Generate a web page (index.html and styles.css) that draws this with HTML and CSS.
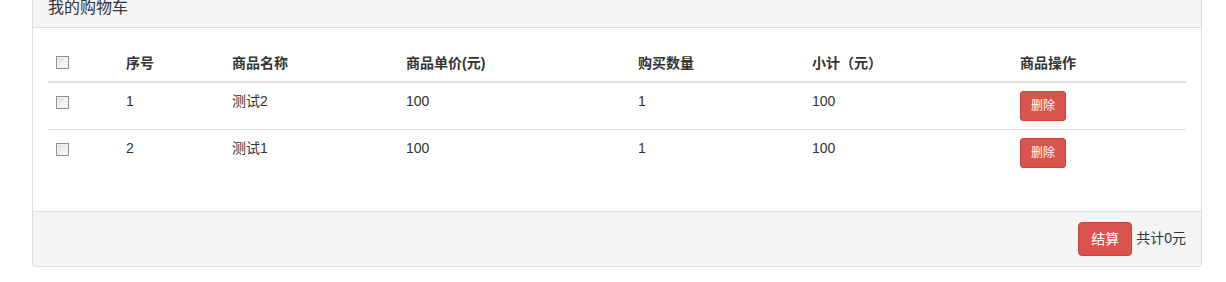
FILE: index.html
```html
<!DOCTYPE html>
<html lang="zh-CN">
<head>
<meta charset="utf-8">
<title>我的购物车</title>
<link rel="stylesheet" href="styles.css">
</head>
<body>
<div class="page">
  <div class="panel">
    <div class="panel-heading">
      <h3 class="panel-title">我的购物车</h3>
    </div>
    <div class="panel-body">
      <table class="cart">
        <thead>
          <tr>
            <th class="c-check"><input type="checkbox" class="cb cb-head"></th>
            <th class="c-no">序号</th>
            <th class="c-name">商品名称</th>
            <th class="c-price">商品单价(元)</th>
            <th class="c-qty">购买数量</th>
            <th class="c-sub">小计（元）</th>
            <th class="c-op">商品操作</th>
          </tr>
        </thead>
        <tbody>
          <tr>
            <td><input type="checkbox" class="cb"></td>
            <td>1</td>
            <td>测试2</td>
            <td>100</td>
            <td>1</td>
            <td>100</td>
            <td><button class="btn btn-danger btn-sm">删除</button></td>
          </tr>
          <tr>
            <td><input type="checkbox" class="cb"></td>
            <td>2</td>
            <td>测试1</td>
            <td>100</td>
            <td>1</td>
            <td>100</td>
            <td><button class="btn btn-danger btn-sm">删除</button></td>
          </tr>
        </tbody>
      </table>
    </div>
    <div class="panel-footer">
      <button class="btn btn-danger">结算</button> 共计0元
    </div>
  </div>
</div>
</body>
</html>
```
FILE: styles.css
```css
* { box-sizing: border-box; }
html, body { margin: 0; padding: 0; background: #fff; }
body {
  font-family: "Liberation Sans", Arial, "Noto Sans CJK SC", sans-serif;
  font-size: 14px;
  line-height: 20px;
  color: #333;
}
.page {
  padding-left: 32px;
  margin-top: -12px;
}
.panel {
  width: 1170px;
  border: 1px solid #ddd;
  border-radius: 4px;
  background: #fff;
  box-shadow: 0 1px 1px rgba(0,0,0,.05);
}
.panel-heading {
  padding: 10px 15px;
  background: #f5f5f5;
  border-bottom: 1px solid #ddd;
  border-radius: 3px 3px 0 0;
}
.panel-title {
  margin: 0;
  font-size: 16px;
  line-height: 17.6px;
  font-weight: normal;
  color: #333;
}
.panel-body {
  padding: 15px;
}
.cart {
  width: 1138px;
  border-collapse: collapse;
  border-spacing: 0;
  table-layout: fixed;
  margin-bottom: 20px;
}
.cart th, .cart td {
  padding: 8px;
  line-height: 20px;
  text-align: left;
  vertical-align: top;
  border-top: 1px solid #ddd;
}
.cart th {
  padding-top: 10px;
  font-weight: bold;
  vertical-align: bottom;
  border-top: 0;
  border-bottom: 2px solid #ddd;
}
.c-check { width: 70px; }
.c-no { width: 106px; }
.c-name { width: 174px; }
.c-price { width: 232px; }
.c-qty { width: 174px; }
.c-sub { width: 208px; }
.c-op { width: 174px; }

.cb {
  -webkit-appearance: none;
  appearance: none;
  display: inline-block;
  width: 13px;
  height: 13px;
  margin: 5px 0 0;
  vertical-align: top;
  border: 1px solid #8f8f8f;
  background: linear-gradient(135deg, #d8d8d8 0%, #f2f2f2 60%, #fcfcfc 100%);
  box-shadow: inset 0 0 0 1px #f4f4f4;
}
.cb-head {
  margin-top: 3px;
}

.btn {
  display: inline-block;
  font-family: inherit;
  font-size: 14px;
  line-height: 20px;
  padding: 6px 12px;
  border: 1px solid transparent;
  border-radius: 4px;
  vertical-align: middle;
  cursor: pointer;
  margin: 0;
}
.btn-danger {
  color: #fff;
  background: #d9534f;
  border-color: #d43f3a;
}
.btn-sm {
  font-size: 12px;
  line-height: 18px;
  padding: 5px 10px;
  border-radius: 3px;
}
.panel-footer {
  padding: 10px 15px;
  background: #f5f5f5;
  border-top: 1px solid #ddd;
  border-radius: 0 0 3px 3px;
  text-align: right;
}
```
